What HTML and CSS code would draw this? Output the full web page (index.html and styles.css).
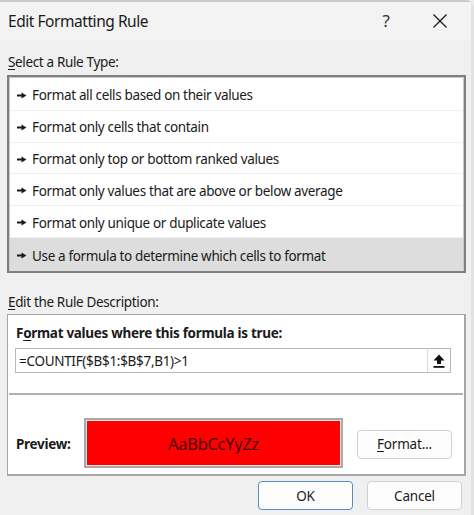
FILE: index.html
```html
<!DOCTYPE html>
<html>
<head>
<meta charset="utf-8">
<link rel="stylesheet" href="styles.css">
</head>
<body>
<div class="window">
  <div class="titlebar">
    <div class="title">Edit Formatting Rule</div>
    <div class="tb-actions">
      <span class="help">?</span>
      <svg class="close" width="16" height="16" viewBox="0 0 16 16"><path d="M1.5 1.5 L14.5 14.5 M14.5 1.5 L1.5 14.5" stroke="#1a1a1a" stroke-width="1.3" fill="none"/></svg>
    </div>
  </div>
  <div class="content">
    <div class="label label-top"><u>S</u>elect a Rule Type:</div>
    <div class="listbox">
      <div class="row"><svg class="arrow" width="10" height="7" viewBox="0 0 10 7"><path d="M0 2.6 H4.5 V0.5 L9.5 3.5 L4.5 6.5 V4.4 H0 Z" fill="#1a1a1a"/></svg>Format all cells based on their values</div>
      <div class="row"><svg class="arrow" width="10" height="7" viewBox="0 0 10 7"><path d="M0 2.6 H4.5 V0.5 L9.5 3.5 L4.5 6.5 V4.4 H0 Z" fill="#1a1a1a"/></svg>Format only cells that contain</div>
      <div class="row"><svg class="arrow" width="10" height="7" viewBox="0 0 10 7"><path d="M0 2.6 H4.5 V0.5 L9.5 3.5 L4.5 6.5 V4.4 H0 Z" fill="#1a1a1a"/></svg>Format only top or bottom ranked values</div>
      <div class="row"><svg class="arrow" width="10" height="7" viewBox="0 0 10 7"><path d="M0 2.6 H4.5 V0.5 L9.5 3.5 L4.5 6.5 V4.4 H0 Z" fill="#1a1a1a"/></svg>Format only values that are above or below average</div>
      <div class="row"><svg class="arrow" width="10" height="7" viewBox="0 0 10 7"><path d="M0 2.6 H4.5 V0.5 L9.5 3.5 L4.5 6.5 V4.4 H0 Z" fill="#1a1a1a"/></svg>Format only unique or duplicate values</div>
      <div class="row selected"><svg class="arrow" width="10" height="7" viewBox="0 0 10 7"><path d="M0 2.6 H4.5 V0.5 L9.5 3.5 L4.5 6.5 V4.4 H0 Z" fill="#1a1a1a"/></svg>Use a formula to determine which cells to format</div>
    </div>
    <div class="label label-desc"><u>E</u>dit the Rule Description:</div>
    <div class="descbox">
      <div class="heading">F<u>o</u>rmat values where this formula is true:</div>
      <div class="formula">
        <span class="formula-text">=COUNTIF($B$1:$B$7,B1)&gt;1</span>
        <span class="refbtn"><svg width="14" height="16" viewBox="0 0 14 16"><path d="M7 1.5 L12.5 7.5 H9 V11 H5 V7.5 H1.5 Z" fill="#111"/><rect x="1.5" y="13" width="11" height="1.8" fill="#111"/></svg></span>
      </div>
      <div class="sep"></div>
      <div class="preview-row">
        <div class="preview-label">Preview:</div>
        <div class="preview-box">AaBbCcYyZz</div>
        <div class="btn btn-format"><u>F</u>ormat...</div>
      </div>
    </div>
    <div class="buttons">
      <div class="btn btn-ok">OK</div>
      <div class="btn btn-cancel">Cancel</div>
    </div>
  </div>
</div>
</body>
</html>
```
FILE: styles.css
```css
html, body {
  margin: 0;
  padding: 0;
}
body {
  width: 474px;
  height: 515px;
  overflow: hidden;
  background: #f0f0f0;
  font-family: "Noto Sans", "Open Sans", sans-serif;
  color: #1a1a1a;
}
u {
  text-decoration: underline;
  text-underline-offset: 2px;
  text-decoration-thickness: 1px;
}
.window {
  width: 474px;
  height: 515px;
  box-sizing: border-box;
  border-top: 2px solid #c9c9c9;
  border-right: 3px solid #e2e2e2;
  border-top-right-radius: 8px;
  background: #f0f0f0;
  display: flex;
  flex-direction: column;
}
.titlebar {
  height: 38px;
  background: #f3f3f3;
  display: flex;
  align-items: center;
  justify-content: space-between;
  padding: 0 0 0 8px;
}
.title {
  font-size: 15.5px;
  letter-spacing: -0.45px;
  margin-top: -1px;
}
.tb-actions {
  display: flex;
  align-items: center;
}
.help {
  font-size: 17px;
  color: #333;
  margin-right: 42px;
  margin-top: -2px;
}
.close {
  margin-right: 23px;
  margin-top: -1px;
}
.content {
  padding: 0 5px 0 7px;
  display: flex;
  flex-direction: column;
}
.label {
  font-size: 13.5px;
  letter-spacing: -0.35px;
  line-height: 20px;
  padding-left: 1px;
}
.label-top {
  margin-top: 12px;
  margin-bottom: 3px;
}
.listbox {
  width: 459px;
  height: 198px;
  box-sizing: border-box;
  border: 2px solid #7f7f7f;
  box-shadow: inset 0 0 0 1px #c8c8c8;
  background: #fff;
  padding: 2px 1px 0 1px;
  display: flex;
  flex-direction: column;
}
.row {
  height: 32px;
  box-sizing: border-box;
  border-bottom: 1px solid #f0f0f0;
  display: flex;
  align-items: center;
  padding-left: 7px;
  font-size: 13.5px;
  letter-spacing: -0.35px;
  padding-top: 2px;
}
.row.selected {
  background: #dddddd;
  border-bottom: none;
  height: 33px;
}
.arrow {
  margin-right: 5px;
  flex: none;
}
.label-desc {
  margin-top: 19px;
  margin-bottom: 2px;
}
.descbox {
  width: 459px;
  height: 162px;
  box-sizing: border-box;
  border: 1px solid #a6a6a6;
  border-right: 2px solid #a6a6a6;
  border-bottom: 2px solid #a6a6a6;
  background: #fff;
  display: flex;
  flex-direction: column;
}
.heading {
  font-weight: bold;
  font-size: 13.5px;
  letter-spacing: -0.3px;
  line-height: 20px;
  margin: 8px 0 0 8px;
}
.formula {
  margin: 5px 13px 0 7px;
  height: 25px;
  box-sizing: border-box;
  border: 1px solid #b9b9b9;
  display: flex;
  align-items: center;
  justify-content: space-between;
}
.formula-text {
  font-size: 13.5px;
  letter-spacing: -0.3px;
  padding-left: 3px;
  padding-top: 1px;
}
.refbtn {
  width: 23px;
  height: 23px;
  box-sizing: border-box;
  border-left: 1px solid #dcdcdc;
  background: #fdfdfd;
  display: flex;
  align-items: center;
  justify-content: center;
}
.sep {
  margin-top: 20px;
  height: 2px;
  background: #b0b0b0;
  margin-left: 1px;
  margin-right: 1px;
}
.preview-row {
  margin-top: 23px;
  display: flex;
  align-items: center;
  padding-left: 8px;
}
.preview-label {
  font-weight: bold;
  font-size: 13.5px;
  letter-spacing: -0.3px;
  width: 68px;
  margin-top: 2px;
}
.preview-box {
  width: 259px;
  height: 50px;
  box-sizing: border-box;
  border: 2px solid #a9a9a9;
  box-shadow: inset 0 0 0 1px #e8e8e8;
  background: #ff0000;
  color: #4a0000;
  font-size: 16.5px;
  letter-spacing: -0.3px;
  display: flex;
  align-items: center;
  justify-content: center;
  padding-top: 1px;
}
.btn {
  box-sizing: border-box;
  height: 29px;
  width: 95px;
  border: 1px solid #d0d0d0;
  border-radius: 4px;
  background: #fdfdfd;
  font-size: 13.5px;
  letter-spacing: -0.2px;
  display: flex;
  align-items: center;
  justify-content: center;
}
.btn-format {
  margin-left: 14px;
  margin-top: 2px;
}
.buttons {
  display: flex;
  justify-content: flex-end;
  gap: 14px;
  margin-top: 5px;
  padding-right: 4px;
}
.btn-ok {
  border: 1px solid #5a8ac2;
}
```
